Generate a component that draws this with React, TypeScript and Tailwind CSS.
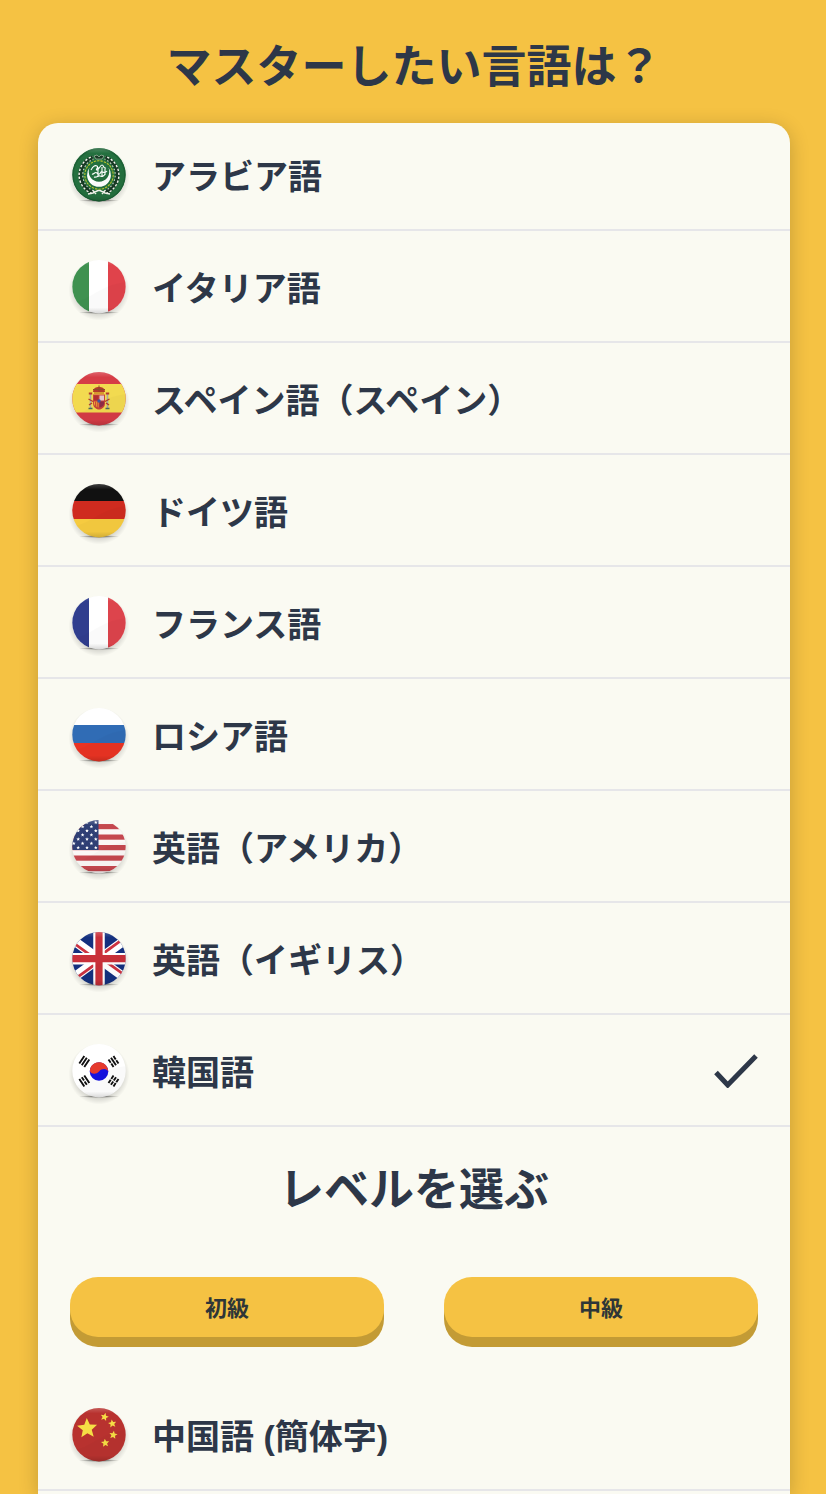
import React, { Fragment, ReactNode, useState } from "react";

type Language = {
  id: string;
  name: string;
  art: ReactNode;
};

const star = (cx: number, cy: number, r: number, turn = 0) =>
  Array.from({ length: 10 }, (_, i) => {
    const radius = i % 2 === 0 ? r : r * 0.45;
    const angle = -Math.PI / 2 + turn + (i * Math.PI) / 5;
    return `${cx + radius * Math.cos(angle)},${cy + radius * Math.sin(angle)}`;
  }).join(" ");

const Arabic = () => (
  <>
    <rect width="54" height="54" fill="#24703f" />
    <circle cx="27" cy="27" r="26" fill="none" stroke="#1d6136" strokeWidth="1.5" />
    <path
      d="M21 44.500A18.500 18.500 0 0 1 21 9.500M33 44.500A18.500 18.500 0 0 0 33 9.500"
      fill="none"
      stroke="#183a25"
      strokeWidth="4"
    />
    <path
      d="M20 45.500A19.600 19.600 0 0 1 20.500 8.500M34 45.500A19.600 19.600 0 0 0 33.500 8.500"
      fill="none"
      stroke="#f4f6ee"
      strokeWidth="1.400"
      strokeDasharray="2.300 1.700"
    />
    <path
      d="M21.500 43A17.300 17.300 0 0 1 21.500 11M32.500 43A17.300 17.300 0 0 0 32.500 11"
      fill="none"
      stroke="#cfd8cc"
      strokeWidth="1.100"
      strokeDasharray="1.600 2"
    />
    <path d="M22 8l3-1 2 2 2-2 3 1-2 3h-6z" fill="#183a25" stroke="#dfe5d8" strokeWidth=".5" />
    <path d="M16 46l5-1 5-2.500h2l5 2.500 5 1M21 42.500l3 3.500M33 42.500l-3 3.500" fill="none" stroke="#f4f6ee" strokeWidth="1.400" />
    <circle cx="27" cy="27" r="14.200" fill="#24703f" stroke="#b9c42d" strokeWidth="1.100" strokeDasharray="2.400 1" />
    <path d="M17.500 19.500a12 12 0 1 0 19 0a10.300 10.300 0 1 1-19 0z" fill="#fff" />
    <path
      d="M19 22c2-4 4-5 6-4s-2 4 0 4 3-5 5-5 1 4 4 3M20 26c2 1 3-3 5-1s3 1 4-1 3 3 6-1M22 29c3 1 4-2 6-1s4 0 5-2M26 19v9M30 19v9M33 21v6"
      fill="none"
      stroke="#fff"
      strokeWidth="1.100"
    />
  </>
);

const Spain = () => (
  <>
    <rect width="54" height="54" fill="#d63c46" />
    <rect y="12" width="54" height="28.500" fill="#f2da50" />
    <path d="M21 20c0-4 3-5 6-5s6 1 6 5z" fill="#b33a2b" />
    <path d="M21 17.500h12M27 13.500v6" stroke="#8b4a2c" strokeWidth="1" />
    <path d="M22 20h10v2H22z" fill="#d59a2e" />
    <path d="M21 22.500h12v9c0 4-4 6-6 6s-6-2-6-6z" fill="#c9443a" />
    <path d="M22 23.500h4.500v5H22z" fill="#b02f32" />
    <path d="M27.500 23.500h4.500v5h-4.500z" fill="#e3c6cd" />
    <path d="M22 29.500h4.500v6c-3-.8-4.500-2-4.500-4z" fill="#eda33b" />
    <path d="M23.500 29.500v5M25.300 29.500v6" stroke="#c33a2e" strokeWidth=".8" />
    <path d="M27.500 29.500h4.500v2c0 2-1.500 3.500-4.500 4z" fill="#8f2b49" />
    <circle cx="27" cy="29" r="1.700" fill="#3d559f" />
    <path d="M18.500 22v14M35.500 22v14" stroke="#a9a6a2" strokeWidth="1.600" />
    <path d="M16.800 21.500h3.400M33.800 21.500h3.400" stroke="#b33a2b" strokeWidth="2" />
    <path d="M16.500 27l4.500 2.500M37.500 27l-4.500 2.500M17 33l3-2M37 33l-3-2" stroke="#b33a2b" strokeWidth="1.400" />
    <path d="M16.500 36.500h4M33.500 36.500h4" stroke="#4c6b5a" strokeWidth="1.600" />
  </>
);

const America = () => (
  <>
    <rect width="54" height="54" fill="#fbf7f6" />
    {[4, 14.5, 25, 35.5, 46].map((y) => (
      <rect key={y} y={y} width="54" height="5.200" fill="#c5474f" />
    ))}
    <rect width="26.500" height="30" fill="#2f3f75" />
    {[0, 1, 2, 3, 4, 5, 6].map((row) =>
      [0, 1, 2].map((col) => (
        <polygon
          key={`${row}-${col}`}
          points={star(col * 8.8 + (row % 2 === 0 ? 6.2 : 1.8), row * 4.2 + 2.4, 1.9)}
          fill="#fff"
        />
      ))
    )}
  </>
);

const Britain = () => (
  <>
    <rect width="54" height="54" fill="#14307f" />
    <path d="M-6 3L60 51M-6 51L60 3" stroke="#fff" strokeWidth="9" />
    <path d="M-6 5.500L27 29.500M60 48.500L27 24.500M-6 53.500L27 29.500M60 .5L27 24.500" stroke="#cc3341" strokeWidth="2.800" />
    <path d="M27 0v54M0 26.700h54" stroke="#fff" strokeWidth="11.500" />
    <path d="M27 0v54M0 26.700h54" stroke="#c9303a" strokeWidth="7.200" />
  </>
);

const Korea = () => (
  <>
    <rect width="54" height="54" fill="#fff" />
    <circle cx="27" cy="27.500" r="9.300" fill="#1612e0" />
    <path
      d="M18.200 24.500A9.300 9.300 0 0 1 36.300 27.500C35 24.500 30 24 27 27.500C24 31 18.500 30 17.800 26.800z"
      fill="#e53a2d"
    />
    <g stroke="#111" strokeWidth="1.900">
      <path d="M-3-4.500v9M0-4.500v9M3-4.500v9" transform="translate(12.300 17.500) rotate(34)" />
      <path d="M-3-4.500v4M-3 .5v4M0-4.500v9M3-4.500v4M3 .5v4" transform="translate(41.500 17.500) rotate(-34)" />
      <path d="M-3-4.500v9M0-4.500v4M0 .5v4M3-4.500v9" transform="translate(12.300 37) rotate(-34)" />
      <path d="M-3-4.500v4M-3 .5v4M0-4.500v4M0 .5v4M3-4.500v4M3 .5v4" transform="translate(41.500 37) rotate(34)" />
    </g>
  </>
);

const China = () => (
  <>
    <rect width="54" height="54" fill="#b8322f" />
    <g fill="#f6de45">
      <polygon points={star(15.2, 20.5, 10.5, -0.04)} />
      <polygon points={star(32.5, 9, 4.3, 0.25)} />
      <polygon points={star(40.3, 15.7, 4.3, -0.15)} />
      <polygon points={star(41.3, 27, 4.3, 0.15)} />
      <polygon points={star(33.2, 35, 4.3, -0.1)} />
    </g>
  </>
);

const vertical = (left: string, right: string) => (
  <>
    <rect width="54" height="54" fill="#fff" />
    <rect width="17" height="54" fill={left} />
    <rect x="36" width="18" height="54" fill={right} />
  </>
);

const horizontal = (top: string, middle: string, bottom: string) => (
  <>
    <rect width="54" height="17" fill={top} />
    <rect y="17" width="54" height="18" fill={middle} />
    <rect y="35" width="54" height="19" fill={bottom} />
  </>
);

const languages: Language[] = [
  { id: "ar", name: "アラビア語", art: <Arabic /> },
  { id: "it", name: "イタリア語", art: vertical("#3f9150", "#e0434b") },
  { id: "es", name: "スペイン語（スペイン）", art: <Spain /> },
  { id: "de", name: "ドイツ語", art: horizontal("#111111", "#cf2b1f", "#f6cb40") },
  { id: "fr", name: "フランス語", art: vertical("#303e8e", "#dd444c") },
  { id: "ru", name: "ロシア語", art: horizontal("#ffffff", "#306cb5", "#e93323") },
  { id: "us", name: "英語（アメリカ）", art: <America /> },
  { id: "gb", name: "英語（イギリス）", art: <Britain /> },
  { id: "ko", name: "韓国語", art: <Korea /> },
  { id: "zh", name: "中国語 (簡体字)", art: <China /> },
];

const Flag = ({ id, children }: { id: string; children: ReactNode }) => (
  <svg viewBox="0 0 54 54" className="size-[54px] shrink-0 overflow-visible" aria-hidden="true">
    <defs>
      <clipPath id={`${id}-clip`}>
        <circle cx="27" cy="26.700" r="26.700" />
      </clipPath>
      <linearGradient id={`${id}-rim`} x1="0" y1="0" x2="0" y2="1">
        <stop offset="0" stopColor="#fff" stopOpacity=".2" />
        <stop offset=".1" stopColor="#fff" stopOpacity="0" />
        <stop offset=".88" stopColor="#000" stopOpacity="0" />
        <stop offset="1" stopColor="#000" stopOpacity=".15" />
      </linearGradient>
      <radialGradient id={`${id}-glow`}>
        <stop offset=".75" stopColor="#000" stopOpacity=".16" />
        <stop offset="1" stopColor="#000" stopOpacity="0" />
      </radialGradient>
      <radialGradient id={`${id}-floor`}>
        <stop offset="0" stopColor="#000" stopOpacity=".6" />
        <stop offset="1" stopColor="#000" stopOpacity="0" />
      </radialGradient>
    </defs>
    <circle cx="27" cy="30" r="30.500" fill={`url(#${id}-glow)`} />
    <ellipse cx="27" cy="52.500" rx="20" ry="1.500" fill={`url(#${id}-floor)`} />
    <g clipPath={`url(#${id}-clip)`}>
      {children}
      <path d="M0 42C18 41 27 25 54 22V54H0z" fill="#000" opacity=".02" />
      <rect width="54" height="54" fill={`url(#${id}-rim)`} />
    </g>
  </svg>
);

const App = () => {
  const [selected, setSelected] = useState("ko");

  return (
    <div
      lang="ja"
      className="flex min-h-screen flex-col bg-[#f5c243] pr-9 pl-[38px] font-['Liberation_Sans','Noto_Sans_CJK_JP',sans-serif] font-bold text-[#2d3748]"
    >
      <h1 className="pt-9 pb-[23px] text-center text-[45px] leading-[64px]">マスターしたい言語は？</h1>
      <main className="flex-1 overflow-hidden rounded-t-[20px] bg-[#fafaf2] shadow-[0_4px_20px_rgba(0,0,0,0.2)]">
        <ul className="-mt-1">
          {languages.map((language) => (
            <Fragment key={language.id}>
              <li className="border-b-2 border-[#e6e6e9]">
                <button
                  type="button"
                  aria-pressed={selected === language.id}
                  onClick={() => setSelected(language.id)}
                  className="flex h-[110px] w-full items-center px-8 pt-0.5 text-left"
                >
                  <span className="flex w-[82px] shrink-0 pl-0.5">
                    <Flag id={language.id}>{language.art}</Flag>
                  </span>
                  <span className="flex-1 pt-1 text-[34px] leading-[48px]">{language.name}</span>
                  {selected === language.id && (
                    <svg viewBox="0 0 44 34" className="h-[34px] w-11" fill="none" aria-hidden="true">
                      <path d="M2 18.500L13.700 31L42 2" stroke="#2d3748" strokeWidth="5" />
                    </svg>
                  )}
                </button>
              </li>
              {selected === language.id && (
                <li className="px-8 pt-8 pb-8">
                  <h2 className="text-center text-[45px] leading-[64px]">レベルを選ぶ</h2>
                  <div className="mt-[54px] mb-2.5 grid grid-cols-2 gap-[60px]">
                    <button
                      type="button"
                      className="h-[60px] rounded-[28px] bg-[#f5c243] pt-0.5 text-[22px] text-[#2f3637] shadow-[0_10px_0_#c39b35]"
                    >
                      初級
                    </button>
                    <button
                      type="button"
                      className="h-[60px] rounded-[28px] bg-[#f5c243] pt-0.5 text-[22px] text-[#2f3637] shadow-[0_10px_0_#c39b35]"
                    >
                      中級
                    </button>
                  </div>
                </li>
              )}
            </Fragment>
          ))}
        </ul>
      </main>
    </div>
  );
};

export default App;
